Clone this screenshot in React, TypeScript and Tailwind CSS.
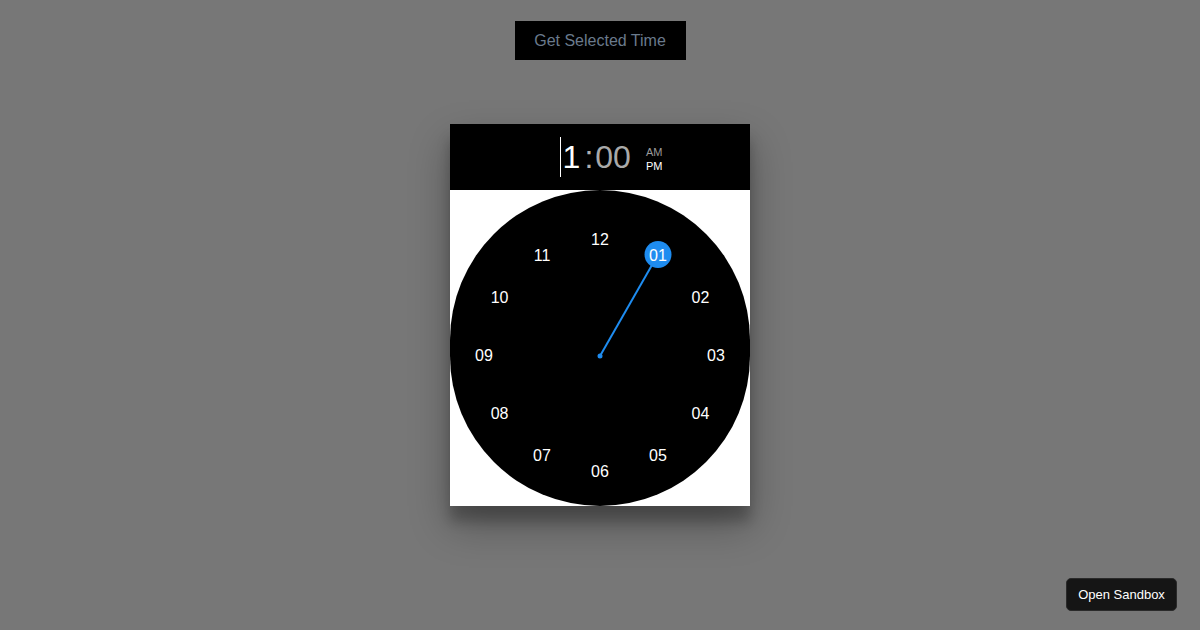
import React from 'react';

const hours = ['12', '01', '02', '03', '04', '05', '06', '07', '08', '09', '10', '11'];
const RADIUS = 116;

const ClockFace: React.FC<{ selected: number }> = ({ selected }) => {
    const angle = (selected % 12) * 30 * (Math.PI / 180);
    const hx = 150 + RADIUS * Math.sin(angle);
    const hy = 165 - RADIUS * Math.cos(angle);

    return (
        <div className="relative w-[300px] h-[316px] rounded-full bg-black">
            <svg className="absolute inset-0" width="300" height="316" viewBox="0 0 300 316">
                <line x1="150" y1="166" x2={hx} y2={hy} stroke="#1e8cf0" strokeWidth="2" />
                <circle cx="150" cy="166" r="2.5" fill="#1e8cf0" />
                <circle cx={hx} cy={hy} r="13.5" fill="#1e8cf0" />
            </svg>
            {hours.map((h, i) => {
                const a = i * 30 * (Math.PI / 180);
                const x = 150 + RADIUS * Math.sin(a);
                const y = 166 - RADIUS * Math.cos(a);
                return (
                    <span
                        key={h}
                        className="absolute -translate-x-1/2 -translate-y-1/2 text-[16px] leading-none text-white"
                        style={{ left: x, top: y }}
                    >
                        {h}
                    </span>
                );
            })}
        </div>
    );
};

const TimePicker: React.FC = () => (
    <div className="w-[300px] bg-white shadow-[0_19px_38px_rgba(0,0,0,0.3),0_15px_12px_rgba(0,0,0,0.22)]">
        <div className="h-[66px] bg-black flex items-center justify-center">
            <div className="flex items-center ml-[22px]">
                <span className="w-px h-[40px] bg-white mr-[2px]" />
                <span className="text-[32px] leading-none text-white">1</span>
                <span className="text-[32px] leading-none text-[#b0b0b0] ml-[4px]">:</span>
                <span className="text-[32px] leading-none text-[#a9a9a9] ml-[2px]">00</span>
                <div className="flex flex-col ml-[15px] mt-[4px] text-[11px] leading-[14px]">
                    <span className="text-[#9a9a9a]">AM</span>
                    <span className="text-white">PM</span>
                </div>
            </div>
        </div>
        <ClockFace selected={1} />
    </div>
);

export default function App() {
    return (
        <div className="min-h-[630px] bg-[#777777] flex flex-col items-center font-['Liberation_Sans',Arial,sans-serif]">
            <button className="mt-[21px] h-[39px] w-[171px] bg-black text-[16px] text-[#6a7a8c]">
                Get Selected Time
            </button>
            <div className="mt-[64px]">
                <TimePicker />
            </div>
            <button className="fixed right-[23px] bottom-[19px] h-[33px] w-[111px] rounded-[5px] border border-[#2a2a2a] bg-[#151515] text-[13px] text-white">
                Open Sandbox
            </button>
        </div>
    );
}
